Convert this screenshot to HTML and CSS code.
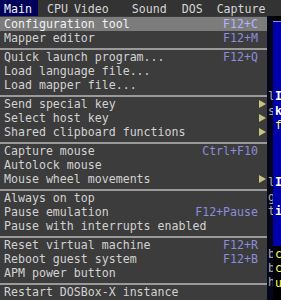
FILE: index.html
```html
<!DOCTYPE html>
<html>
<head>
<meta charset="utf-8">
<link rel="stylesheet" href="styles.css">
</head>
<body>
<div class="screen">
  <div class="menubar">
    <span class="mb-item mb-main active">Main</span>
    <span class="mb-item mb-cpu">CPU</span>
    <span class="mb-item mb-video">Video</span>
    <span class="mb-item mb-sound">Sound</span>
    <span class="mb-item mb-dos">DOS</span>
    <span class="mb-item mb-capture">Capture</span>
  </div>
  <div class="desk">
    <div class="dos">
      <div class="gut">
        <div class="ln"></div><div class="ln"></div><div class="ln"></div><div class="ln"></div><div class="ln"></div>
        <div class="ln">l</div>
        <div class="ln">s</div>
        <div class="ln"></div><div class="ln"></div><div class="ln"></div><div class="ln"></div>
        <div class="ln">l</div>
        <div class="ln">g</div>
        <div class="ln">t</div>
        <div class="ln"></div><div class="ln"></div>
        <div class="ln">b</div>
        <div class="ln">b</div>
        <div class="ln">h</div>
      </div>
      <div class="side">
        <div class="blue">
          <div class="ln"></div><div class="ln"></div><div class="ln"></div><div class="ln"></div>
          <div class="ln wt">I</div>
          <div class="ln wt">k</div>
          <div class="ln yl">f</div>
          <div class="ln"></div><div class="ln"></div><div class="ln"></div>
          <div class="ln wt">I</div>
          <div class="ln"></div>
          <div class="ln wt">i</div>
        </div>
        <div class="below">
          <div class="ln yl">c</div>
          <div class="ln yl">c</div>
          <div class="ln yl">u</div>
        </div>
      </div>
    </div>
  </div>

  <div class="dropdown">
    <div class="row hl"><span class="label">Configuration tool</span><span class="key">F12+C</span></div>
    <div class="row"><span class="label">Mapper editor</span><span class="key">F12+M</span></div>
    <div class="sep"></div>
    <div class="row"><span class="label">Quick launch program...</span><span class="key">F12+Q</span></div>
    <div class="row"><span class="label">Load language file...</span></div>
    <div class="row"><span class="label">Load mapper file...</span></div>
    <div class="sep"></div>
    <div class="row"><span class="label">Send special key</span><span class="arrow"></span></div>
    <div class="row"><span class="label">Select host key</span><span class="arrow"></span></div>
    <div class="row"><span class="label">Shared clipboard functions</span><span class="arrow"></span></div>
    <div class="sep"></div>
    <div class="row"><span class="label">Capture mouse</span><span class="key">Ctrl+F10</span></div>
    <div class="row"><span class="label">Autolock mouse</span></div>
    <div class="row"><span class="label">Mouse wheel movements</span><span class="arrow"></span></div>
    <div class="sep"></div>
    <div class="row"><span class="label">Always on top</span></div>
    <div class="row"><span class="label">Pause emulation</span><span class="key">F12+Pause</span></div>
    <div class="row"><span class="label">Pause with interrupts enabled</span></div>
    <div class="sep"></div>
    <div class="row"><span class="label">Reset virtual machine</span><span class="key">F12+R</span></div>
    <div class="row"><span class="label">Reboot guest system</span><span class="key">F12+B</span></div>
    <div class="row"><span class="label">APM power button</span></div>
    <div class="sep"></div>
    <div class="row"><span class="label">Restart DOSBox-X instance</span></div>
  </div>
</div>
</body>
</html>
```

FILE: styles.css
```css
* { box-sizing: border-box; }
html, body { margin: 0; padding: 0; background: #000; }
body {
  font-family: "DejaVu Sans Mono", monospace;
  font-size: 11.6px;
}
.screen {
  position: relative;
  width: 281px;
  height: 300px;
  overflow: hidden;
  background: #000;
}

/* menu bar */
.menubar {
  display: flex;
  height: 16px;
  background: #333333;
  color: #d6d6d6;
}
.mb-item {
  height: 16px;
  padding-top: 2px;
  line-height: 14px;
  white-space: pre;
}
.mb-item.active { background: #00005a; color: #f4f4f4; }
.mb-main { padding-left: 4px; padding-right: 6px; }
.mb-cpu { margin-left: 9px; }
.mb-video { margin-left: 6px; }
.mb-sound { margin-left: 23px; }
.mb-dos { margin-left: 15px; }
.mb-capture { margin-left: 14px; }

/* DOS screen behind */
.desk {
  height: 284px;
  display: flex;
  justify-content: flex-end;
}
.dos {
  width: 14px;
  display: flex;
  padding-top: 2px;
}
.ln {
  height: 14.3px;
  line-height: 14.3px;
  white-space: pre;
}
.gut {
  width: 6px;
  margin-top: -2px;
  padding-top: 2px;
  background: #05051c;
  color: #a8a8a8;
  padding-left: 1px;
  overflow: hidden;
}
.side {
  flex: 1;
  display: flex;
  flex-direction: column;
  overflow: hidden;
}
.blue {
  margin-top: 3px;
  height: 225px;
  background: #0000aa;
  border-top: 1px solid #8c8cf0;
  padding-top: 10.3px;
  padding-left: 2px;
}
.below {
  padding-top: 1px;
  padding-left: 2px;
}
.wt { color: #ffffff; font-weight: bold; }
.yl { color: #ffff55; }

/* dropdown menu */
.dropdown {
  position: absolute;
  left: 0;
  top: 16px;
  width: 267px;
  height: 284px;
  background: #3c3c3c;
  padding-top: 1px;
  color: #d2d2d2;
}
.row {
  display: flex;
  align-items: center;
  height: 14px;
  line-height: 14px;
  padding-left: 4px;
  padding-right: 1px;
  white-space: pre;
}
.row.hl { background: #7c7c7c; color: #f2f2f2; }
.label { flex: 1; }
.key {
  color: #8c8cdc;
  margin-right: 8px;
}
.row.hl .key { color: #b4b4ff; }
.arrow {
  width: 0;
  height: 0;
  border-left: 7px solid #c6c47e;
  border-top: 4.5px solid transparent;
  border-bottom: 4.5px solid transparent;
}
.sep {
  height: 5px;
  padding-top: 3px;
}
.sep::before {
  content: "";
  display: block;
  height: 2px;
  background: #9a9a9a;
}
```
